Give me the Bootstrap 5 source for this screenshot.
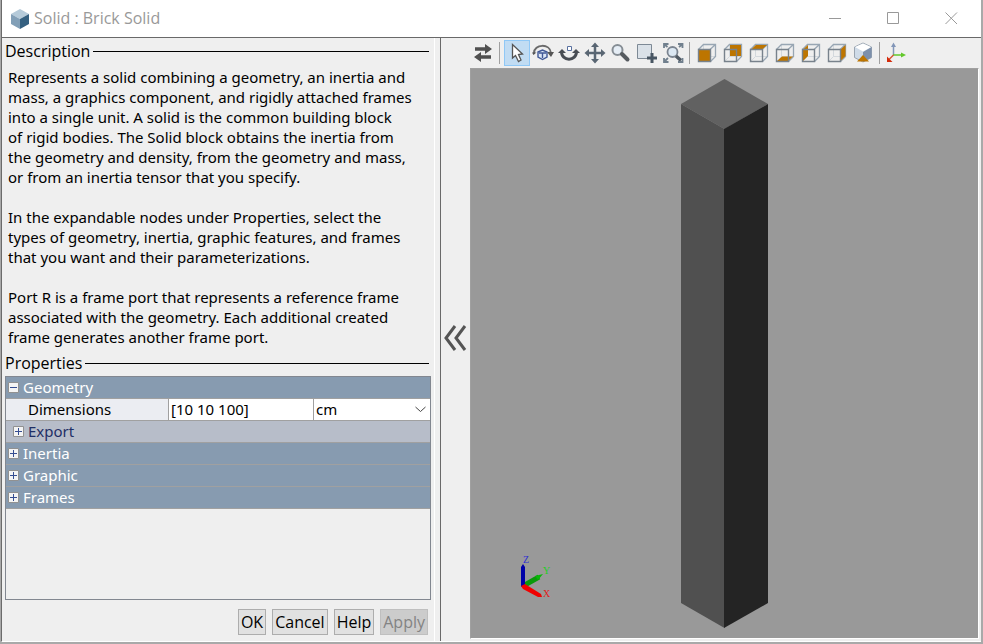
<!DOCTYPE html>
<html lang="en">
<head>
<meta charset="utf-8">
<meta name="viewport" content="width=device-width, initial-scale=1">
<title>Solid : Brick Solid</title>
<link rel="stylesheet" href="https://cdn.jsdelivr.net/npm/bootstrap@5.3.0/dist/css/bootstrap.min.css">
<style>
body{font-family:"Noto Sans","Open Sans",sans-serif;font-size:15px;line-height:20px;color:#000;background:#a9a9a9}
.win{padding:0 2px 2px 1px}
.frame{background:#efefef;border-left:1px solid #6b6b6b;border-bottom:1px solid #fff}
.titlebar{height:38px;background:#fff;border-bottom:1px solid #696969;color:#999;padding:0 1px 0 8px}
.titlebar h1,.heading h2,.acts .btn{font-family:"Open Sans","Noto Sans",sans-serif;font-size:16px;line-height:20px;font-weight:400}
.titlebar h1{padding-bottom:1px}
.wbtn{width:58px;height:36px;border:0;background:none;padding:0}
.side{flex:0 0 433px;padding:3px 3px 6px 3px;border-right:1px solid #fff}
.heading{height:20px;gap:3px;padding-right:2px}
.rule{height:1px;background:#000}
.desc{padding:6px 0 6px 3px;white-space:nowrap}
.desc p{margin-bottom:20px}
.desc p:last-child{margin-bottom:0}
.tree{margin-top:3px;border:1px solid #828790}
.tree table{table-layout:fixed;border-collapse:separate;border-spacing:0}
.tree td{height:22px;line-height:21px;padding:0;border-bottom:1px solid #a0a0a0;vertical-align:top}
.col-name{width:162px}
.col-value{width:145px}
.sec td{background:#879bb0;color:#fff}
.sub td{background:#b7bdc9;color:#1f2f66}
.name{background:#ebedf2;padding-left:22px !important}
.cell{border-left:1px solid #a0a0a0 !important;background:#fff}
.tog{border:0;background:none;color:inherit;height:21px;gap:4px;padding:0 0 0 2px}
.sub .tog{padding-left:7px}
.cell input,.cell select{width:100%;height:21px;border:0;padding:0 2px;background:#fff;color:#000;display:block;border-radius:0;outline:0}
.cell select{appearance:none}
.drop{right:4px;top:7px;pointer-events:none}
.acts{gap:6px;padding:9px 3px 0 0}
.acts .btn{height:26px;padding:0 2px;border:1px solid #adadad;border-radius:0;background:#e1e1e1;color:#000}
.acts .btn:disabled{background:#ccc;border-color:#bfbfbf;color:#838383;opacity:1}
.view{margin-left:5px;border-left:1px solid #696969;padding-right:1px}
.fold{flex:0 0 29px;border:0;background:none;padding:0 2px 3px 0}
.tools{height:30px;padding-top:2px}
.tool{flex:0 0 26px;height:26px;border:1px solid transparent;background:none;padding:0}
.tool.on{background:#c1dcf3;border-color:#90c8f6}
.sep{flex:0 0 1px;height:22px;margin:2px 4px 0 3px;background:#a0a0a0}
.scene{background:#999;border:1px solid #a0a0a0;border-right-color:#fff;border-bottom-color:#fff;margin:0 1px 2px 0}
svg{display:block}
</style>
<script src="https://cdn.jsdelivr.net/npm/bootstrap@5.3.0/dist/js/bootstrap.bundle.min.js"></script>
</head>
<body>
<svg class="d-none" aria-hidden="true">
 <symbol id="cube" viewBox="0 0 24 24"><path d="M8.500 4V15.500H20M8.500 15.500L3.500 20.500" fill="none" stroke="#d3d8dd" stroke-width="1"/><path d="M3.500 8.500L8.500 3.500H20.500V15.500L15.500 20.500M15 8.500L20.500 3.500" fill="none" stroke="#98a6b3" stroke-width="1.300"/></symbol>
 <symbol id="front" viewBox="0 0 24 24"><path d="M3.500 8.500H15.500V20.500H3.500z" fill="none" stroke="#78828c" stroke-width="1.400"/></symbol>
 <symbol id="plus" viewBox="0 0 11 11"><path d="M.5.500H10.500V10.500H.5z" fill="#f4f4f4" stroke="#919191"/><path d="M2 5.500H9M5.500 2V9" stroke="#354d91"/></symbol>
</svg>
<div class="win vh-100">
<div class="frame h-100 d-flex flex-column">
<header class="titlebar d-flex align-items-center">
 <svg width="20" height="22" viewBox="0 0 20 22" aria-hidden="true"><path d="M10 1L19 6L10 11L1 6z" fill="#b5cad9"/><path d="M1 6L10 11V21L1 16z" fill="#829fb7"/><path d="M19 6L10 11V21L19 16z" fill="#356080"/></svg>
 <h1 class="mb-0 ms-1 flex-grow-1">Solid : Brick Solid</h1>
 <button class="wbtn" type="button" aria-label="Minimize"><svg class="mx-auto" width="13" height="13"><path d="M0 6.500H12" stroke="#999"/></svg></button>
 <button class="wbtn" type="button" aria-label="Maximize"><svg class="mx-auto" width="13" height="13"><path d="M.5.500H11.500V11.500H.5z" fill="none" stroke="#999"/></svg></button>
 <button class="wbtn" type="button" aria-label="Close"><svg class="mx-auto" width="13" height="13"><path d="M.5.500L12 12M12 .5L.5 12" stroke="#999"/></svg></button>
</header>
<div class="d-flex flex-grow-1">
<section class="side d-flex flex-column">
 <div class="heading d-flex align-items-center"><h2 class="mb-0">Description</h2><div class="rule flex-grow-1"></div></div>
 <div class="desc">
  <p>Represents a solid combining a geometry, an inertia and<br>mass, a graphics component, and rigidly attached frames<br>into a single unit. A solid is the common building block<br>of rigid bodies. The Solid block obtains the inertia from<br>the geometry and density, from the geometry and mass,<br>or from an inertia tensor that you specify.</p>
  <p>In the expandable nodes under Properties, select the<br>types of geometry, inertia, graphic features, and frames<br>that you want and their parameterizations.</p>
  <p>Port R is a frame port that represents a reference frame<br>associated with the geometry. Each additional created<br>frame generates another frame port.</p>
 </div>
 <div class="heading d-flex align-items-center"><h2 class="mb-0">Properties</h2><div class="rule flex-grow-1"></div></div>
 <div class="tree flex-grow-1">
  <table class="w-100">
   <colgroup><col class="col-name"><col class="col-value"><col></colgroup>
   <tbody>
   <tr class="sec"><td colspan="3"><button class="tog d-flex align-items-center" type="button" aria-expanded="true"><svg width="11" height="11" viewBox="0 0 11 11"><path d="M.5.500H10.500V10.500H.5z" fill="#f4f4f4" stroke="#919191"/><path d="M2 5.500H9" stroke="#354d91"/></svg>Geometry</button></td></tr>
   <tr><td class="name"><label for="dims">Dimensions</label></td><td class="cell"><input id="dims" type="text" value="[10 10 100]"></td><td class="cell"><div class="position-relative"><select aria-label="Dimensions unit"><option>cm</option></select><svg class="drop position-absolute" width="11" height="7"><path d="M.5 1L5.500 5.500L10.500 1" fill="none" stroke="#444"/></svg></div></td></tr>
   <tr class="sub"><td colspan="3"><button class="tog d-flex align-items-center" type="button"><svg width="11" height="11"><use href="#plus"/></svg>Export</button></td></tr>
   <tr class="sec"><td colspan="3"><button class="tog d-flex align-items-center" type="button"><svg width="11" height="11"><use href="#plus"/></svg>Inertia</button></td></tr>
   <tr class="sec"><td colspan="3"><button class="tog d-flex align-items-center" type="button"><svg width="11" height="11"><use href="#plus"/></svg>Graphic</button></td></tr>
   <tr class="sec"><td colspan="3"><button class="tog d-flex align-items-center" type="button"><svg width="11" height="11"><use href="#plus"/></svg>Frames</button></td></tr>
   </tbody>
  </table>
 </div>
 <div class="acts d-flex justify-content-end">
  <button class="btn" type="button">OK</button><button class="btn" type="button">Cancel</button><button class="btn" type="button">Help</button><button class="btn" type="button" disabled>Apply</button>
 </div>
</section>
<section class="view d-flex flex-grow-1">
 <button class="fold d-flex align-items-center justify-content-center" type="button" aria-label="Collapse panel"><svg width="24" height="28" viewBox="0 0 24 28"><path d="M12 2L3 14L12 26M22 2L13 14L22 26" fill="none" stroke="#555" stroke-width="3"/></svg></button>
 <div class="flex-grow-1 d-flex flex-column">
 <div class="tools d-flex">
  <button class="tool" type="button" aria-label="Swap"><svg width="24" height="24"><path d="M4 8H14M9 16H20" stroke="#505050" stroke-width="3.500"/><path d="M14 3L21 8L14 13zM10 11L3 16L10 21z" fill="#505050"/></svg></button>
  <span class="sep"></span>
  <button class="tool on" type="button" aria-label="Select"><svg width="24" height="24"><path d="M7.500 3.500V17L10.500 14.500L13.500 20.500L16 19L13.500 13.500L17.500 13z" fill="#fff" stroke="#555" stroke-width="1.300"/></svg></button>
  <button class="tool" type="button" aria-label="Rotate"><svg width="24" height="24"><path d="M3 12C3 3 19 2 20 12" fill="none" stroke="#6a6a6a" stroke-width="2"/><path d="M16 11H23L20 16zM1 11.500H5.500L2.500 14z" fill="#555"/><path d="M7 11L11.500 9L16 11V16L11.500 18.500L7 16z" fill="#dce6f5" stroke="#405897" stroke-width="1.400"/><path d="M8 12H15M11.500 12V17" stroke="#405897" stroke-width="1.400"/></svg></button>
  <button class="tool" type="button" aria-label="Roll"><svg width="24" height="24"><path d="M4.500 10C4 21 20 21 19.500 10" fill="none" stroke="#484d54" stroke-width="3"/><path d="M1 12L5 8L9 12zM15 12L19 8L23 12z" fill="#484d54"/><path d="M10.500 5.500H14.500V9.500H10.500z" fill="#fff" stroke="#5870a0"/></svg></button>
  <button class="tool" type="button" aria-label="Pan"><svg width="24" height="24"><path d="M12 4V20M4 12H20" stroke="#596673" stroke-width="2.500"/><path d="M12 1.500L16 6H8zM12 22.500L16 18H8zM1.500 12L6 8V16zM22.500 12L18 8V16z" fill="#596673"/></svg></button>
  <button class="tool" type="button" aria-label="Zoom"><svg width="24" height="24"><circle cx="8.500" cy="9" r="5" fill="#e5edf5" stroke="#858d94" stroke-width="2"/><path d="M13 13L18.500 18.500" stroke="#565b60" stroke-width="4" stroke-linecap="round"/></svg></button>
  <button class="tool" type="button" aria-label="Zoom region"><svg width="24" height="24"><path d="M2.500 3.500H16.500V17.500H2.500z" fill="#dae1e8" stroke="#7d8995"/><path d="M17 12V22M12 17H22" stroke="#485663" stroke-width="3"/></svg></button>
  <button class="tool" type="button" aria-label="Fit to view"><svg width="24" height="24"><circle cx="11.500" cy="11" r="5" fill="#dce8f3" stroke="#7b8490" stroke-width="1.800"/><path d="M15 15L20 19.500" stroke="#505a64" stroke-width="3.500"/><path d="M3 7V3H7.500M17 3H21.500V7M3 17V21H7.500M3.500 3.500L6.500 6M21 3.500L18 6M3.500 20.500L7 17M21.500 17V21H17" fill="none" stroke="#71808e" stroke-width="1.800"/></svg></button>
  <span class="sep"></span>
  <button class="tool" type="button" aria-label="Front view"><svg width="24" height="24"><use href="#cube"/><path d="M4 9H15V20H4z" fill="#bd7500"/><use href="#front"/></svg></button>
  <button class="tool" type="button" aria-label="Back view"><svg width="24" height="24"><use href="#cube"/><path d="M9 4H20V15H9z" fill="#bd7500"/><use href="#front"/></svg></button>
  <button class="tool" type="button" aria-label="Top view"><svg width="24" height="24"><use href="#cube"/><path d="M9 4H20L15 8.500H4z" fill="#bd7500"/><use href="#front"/></svg></button>
  <button class="tool" type="button" aria-label="Bottom view"><svg width="24" height="24"><use href="#cube"/><path d="M9 15.500H20L15 20H4z" fill="#bd7500"/><use href="#front"/></svg></button>
  <button class="tool" type="button" aria-label="Left view"><svg width="24" height="24"><use href="#cube"/><path d="M4 8.500L9 4V15L4 20z" fill="#bd7500"/><use href="#front"/></svg></button>
  <button class="tool" type="button" aria-label="Right view"><svg width="24" height="24"><use href="#cube"/><path d="M15.500 8.500L20.500 4V15L15.500 20z" fill="#bd7500"/><use href="#front"/></svg></button>
  <button class="tool" type="button" aria-label="Isometric view"><svg width="24" height="24"><path d="M12 2L20.500 6V16.500L12 21L3.500 16.500V6z" fill="#cfdbe8" stroke="#9aa5b1"/><path d="M12 11L20.500 6V16.500L12 21z" fill="#7d90ab"/><path d="M12 2.500L20 6L12 10.500L4 6z" fill="#fff"/><path d="M12 14L18 20.500H6z" fill="#bd7500"/></svg></button>
  <span class="sep"></span>
  <button class="tool" type="button" aria-label="Show frames"><svg width="24" height="24"><path d="M8.500 14V4" stroke="#8296b8" stroke-width="1.500"/><path d="M8.500 1.500L11 6H6z" fill="#8296b8"/><path d="M8 14H18" stroke="#63c82c" stroke-width="1.500"/><path d="M16 11.500L21 14L16 16.500z" fill="#63c82c"/><path d="M8.500 14L4 18.500" stroke="#d75435" stroke-width="1.500"/><path d="M2 15.500V21H7.500z" fill="#d42b0b"/></svg></button>
 </div>
 <div class="scene flex-grow-1">
  <svg width="100%" height="100%" viewBox="471 69 507 569" role="img" aria-label="Brick solid">
   <path d="M724.500 79L768 104L724.500 129L681 104z" fill="#616161"/><path d="M681 104L724.500 129V628L681 603z" fill="#505050"/><path d="M768 104L724 129V628L768 603z" fill="#242424"/>
   <path d="M523 586L539 577" stroke="#0a9a0a" stroke-width="5"/><path d="M535 576L543 574L538 580z" fill="#08b808"/><path d="M521 587V567L523 564L525 567V585z" fill="#0000a8"/><path d="M521 586L525 584L541 594L542 597L538 597L523 589z" fill="#f00000"/>
   <g font-family="Liberation Serif" font-size="10"><text x="523" y="563" fill="#3030d0">Z</text><text x="543" y="574" fill="#20d020">Y</text><text x="543" y="597" fill="#e02020">X</text></g>
  </svg>
 </div>
 </div>
</section>
</div>
</div>
</div>
</body>
</html>
